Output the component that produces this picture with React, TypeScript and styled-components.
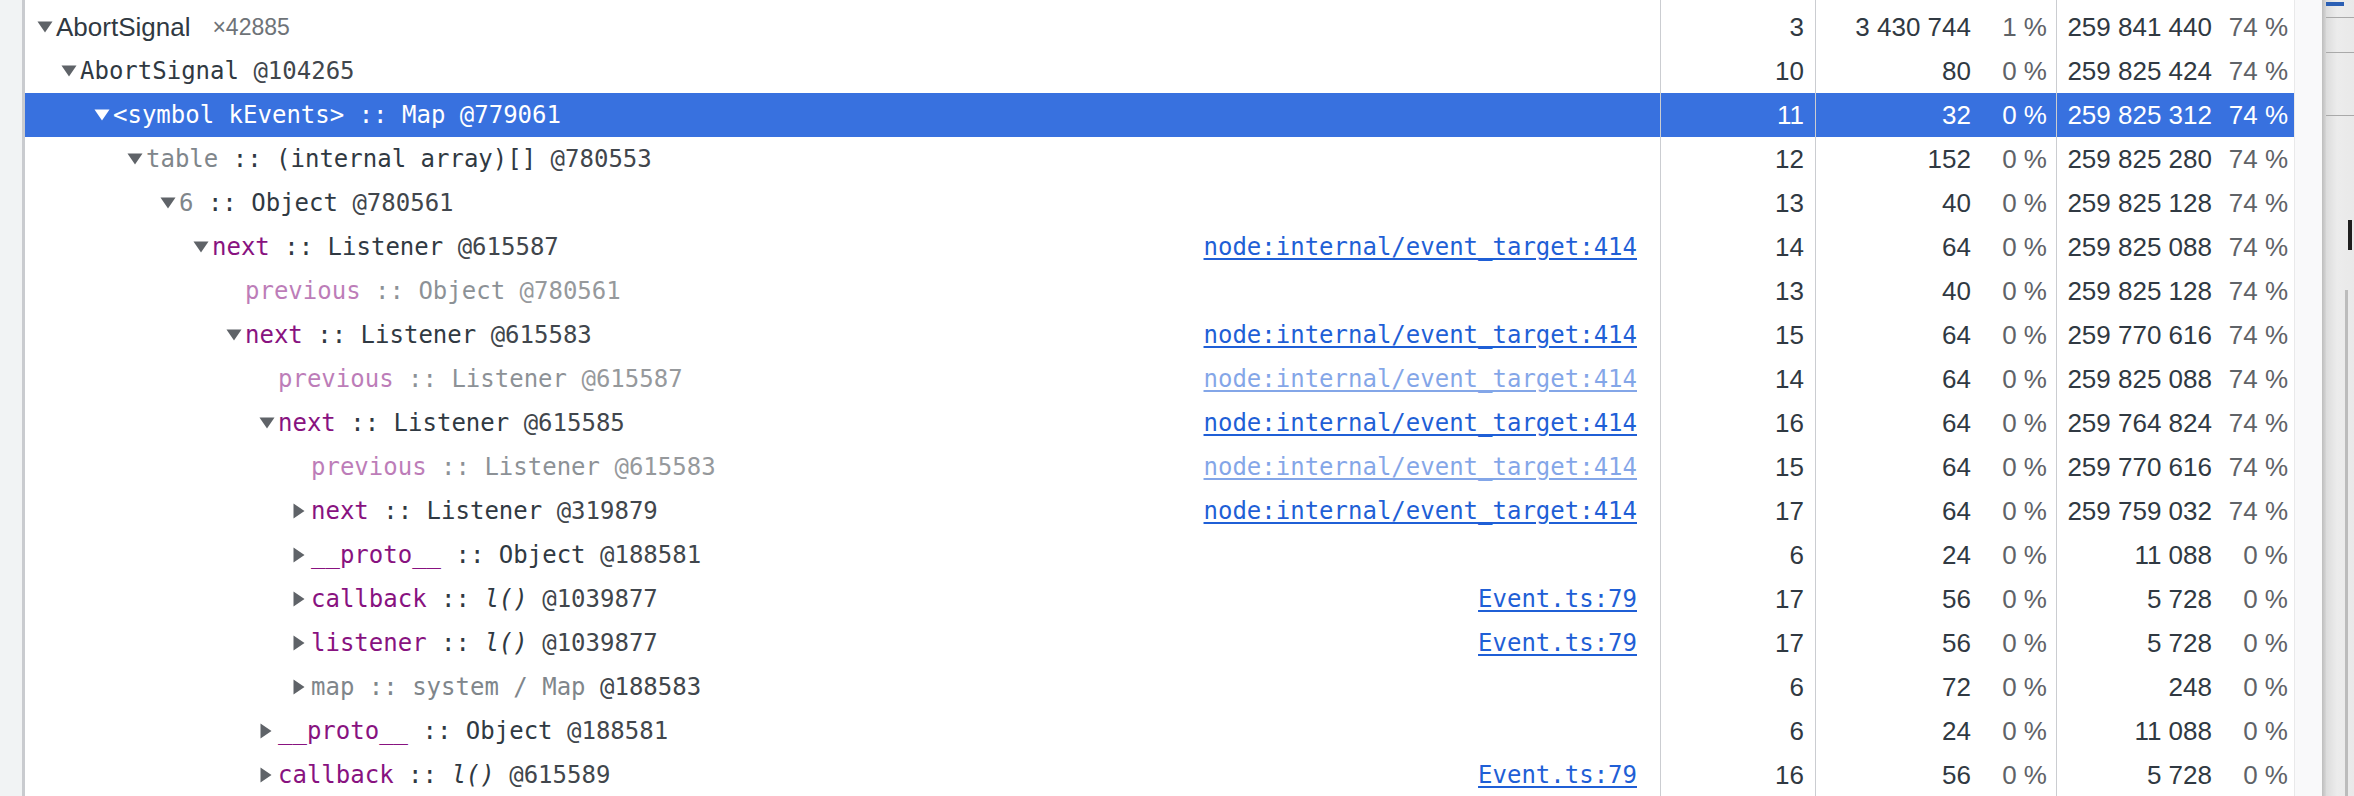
import React from "react";
import styled, { createGlobalStyle } from "styled-components";

const GlobalStyle = createGlobalStyle`
  html, body { margin: 0; padding: 0; background: #ffffff; overflow: hidden; }
  #root { width: 2354px; height: 796px; }
`;

const MONO = `"DejaVu Sans Mono", "Liberation Mono", monospace`;
const SANS = `"Liberation Sans", Arial, sans-serif`;

const Page = styled.div`
  display: flex;
  width: 2354px;
  height: 796px;
  overflow: hidden;
  background: #ffffff;
`;

const Gutter = styled.div`
  flex: 0 0 22px;
  background: #f1f3f4;
  border-right: 3px solid #c9cbcf;
`;

const Grid = styled.div`
  flex: 0 0 2269px;
  display: flex;
  flex-direction: column;
`;

const Row = styled.div<{ $sel?: boolean; $h?: number }>`
  display: grid;
  grid-template-columns: 1636px 155px 241px 237px;
  height: ${(p) => p.$h ?? 44}px;
  flex: 0 0 auto;
  background: ${(p) => (p.$sel ? "#3871df" : "transparent")};
  color: ${(p) => (p.$sel ? "#ffffff" : "#303942")};
`;

const Cell = styled.div`
  box-sizing: border-box;
  border-right: 1px solid #cbcdd1;
  height: 100%;
  &:last-child { border-right: none; }
`;

const NameCell = styled(Cell)<{ $indent: number }>`
  display: flex;
  align-items: center;
  padding-left: ${(p) => p.$indent}px;
  padding-right: 23px;
  white-space: pre;
  font-family: ${MONO};
  font-size: 24px;
`;

const NameBody = styled.div<{ $dim?: boolean }>`
  display: flex;
  align-items: center;
  opacity: ${(p) => (p.$dim ? 0.55 : 1)};
`;

const Toggle = styled.span<{ $sel?: boolean }>`
  flex: 0 0 19px;
  width: 19px;
  height: 16px;
  display: inline-flex;
  align-items: center;
  color: ${(p) => (p.$sel ? "#ffffff" : "#5f6368")};
`;

const Prop = styled.span<{ $sel?: boolean; $gray?: boolean }>`
  color: ${(p) => (p.$sel ? "#ffffff" : p.$gray ? "#80868b" : "#881280")};
`;

const Plain = styled.span<{ $sel?: boolean; $gray?: boolean; $italic?: boolean }>`
  color: ${(p) => (p.$sel ? "#ffffff" : p.$gray ? "#80868b" : "#303942")};
  font-style: ${(p) => (p.$italic ? "italic" : "normal")};
`;

const IdText = styled.span<{ $sel?: boolean }>`
  color: ${(p) => (p.$sel ? "#ffffff" : "#41464c")};
`;

const GroupName = styled.span`
  font-family: ${SANS};
  font-size: 26px;
  color: #303942;
`;

const GroupCount = styled.span`
  font-family: ${SANS};
  font-size: 23px;
  color: #6e7378;
  margin-left: 22px;
`;

const Link = styled.a<{ $dim?: boolean }>`
  margin-left: auto;
  color: #1f5fd6;
  text-decoration: underline;
  text-underline-offset: 3px;
  font-family: ${MONO};
  font-size: 24px;
  opacity: ${(p) => (p.$dim ? 0.55 : 1)};
  cursor: pointer;
`;

const NumCell = styled(Cell)<{ $pr: number }>`
  display: flex;
  align-items: center;
  justify-content: flex-end;
  padding-right: ${(p) => p.$pr}px;
  font-family: ${SANS};
  font-size: 26px;
  white-space: pre;
`;

const Pct = styled.span<{ $sel?: boolean }>`
  display: inline-block;
  width: 76px;
  text-align: right;
  color: ${(p) => (p.$sel ? "#ffffff" : "#5f6368")};
`;

const Track = styled.div`
  flex: 0 0 27px;
  background: #f9f9fa;
  border-left: 1px solid #e9e9ea;
`;

const Divider = styled.div`
  flex: 0 0 4px;
  background: linear-gradient(to right, #bdbdbd, #d6d6d6);
`;

const Side = styled.div`
  flex: 0 0 28px;
  display: flex;
  flex-direction: column;
  background: linear-gradient(to right, #dcdcdc, #ececec 40%, #e9e9e9);
`;

const SideTab = styled.div`
  width: 18px;
  height: 4px;
  margin-top: 2px;
  background: #2b5fb4;
`;

const SideRule = styled.div<{ $mt: number }>`
  height: 1px;
  margin-top: ${(p) => p.$mt}px;
  background: #a9a9a9;
`;

const SideCaret = styled.div`
  width: 4px;
  height: 30px;
  margin-top: 104px;
  margin-left: 22px;
  background: #1f1f1f;
`;

const SideScroll = styled.div`
  width: 3px;
  flex: 1 1 auto;
  margin-top: 40px;
  margin-left: 19px;
  background: #bcbcbc;
`;

type Kind = "prop" | "gprop" | "sep" | "cls" | "sys" | "fn" | "id";
type Seg = [Kind, string];
type State = "open" | "closed" | "leaf";

interface RowData {
  level: number;
  state: State;
  segs?: Seg[];
  group?: [string, string];
  link?: string;
  dim?: boolean;
  sel?: boolean;
  d: string;
  s: string;
  sp: string;
  r: string;
  rp: string;
}

const NODE = "node:internal/event_target:414";
const EV = "Event.ts:79";

const rows: RowData[] = [
  { level: 0, state: "open", group: ["AbortSignal", "×42885"], d: "3", s: "3 430 744", sp: "1 %", r: "259 841 440", rp: "74 %" },
  { level: 1, state: "open", segs: [["cls", "AbortSignal"], ["sep", " "], ["id", "@104265"]], d: "10", s: "80", sp: "0 %", r: "259 825 424", rp: "74 %" },
  { level: 2, state: "open", sel: true, segs: [["prop", "<symbol kEvents>"], ["sep", " :: "], ["cls", "Map"], ["sep", " "], ["id", "@779061"]], d: "11", s: "32", sp: "0 %", r: "259 825 312", rp: "74 %" },
  { level: 3, state: "open", segs: [["gprop", "table"], ["sep", " :: "], ["cls", "(internal array)[]"], ["sep", " "], ["id", "@780553"]], d: "12", s: "152", sp: "0 %", r: "259 825 280", rp: "74 %" },
  { level: 4, state: "open", segs: [["gprop", "6"], ["sep", " :: "], ["cls", "Object"], ["sep", " "], ["id", "@780561"]], d: "13", s: "40", sp: "0 %", r: "259 825 128", rp: "74 %" },
  { level: 5, state: "open", link: NODE, segs: [["prop", "next"], ["sep", " :: "], ["cls", "Listener"], ["sep", " "], ["id", "@615587"]], d: "14", s: "64", sp: "0 %", r: "259 825 088", rp: "74 %" },
  { level: 6, state: "leaf", dim: true, segs: [["prop", "previous"], ["sep", " :: "], ["cls", "Object"], ["sep", " "], ["id", "@780561"]], d: "13", s: "40", sp: "0 %", r: "259 825 128", rp: "74 %" },
  { level: 6, state: "open", link: NODE, segs: [["prop", "next"], ["sep", " :: "], ["cls", "Listener"], ["sep", " "], ["id", "@615583"]], d: "15", s: "64", sp: "0 %", r: "259 770 616", rp: "74 %" },
  { level: 7, state: "leaf", dim: true, link: NODE, segs: [["prop", "previous"], ["sep", " :: "], ["cls", "Listener"], ["sep", " "], ["id", "@615587"]], d: "14", s: "64", sp: "0 %", r: "259 825 088", rp: "74 %" },
  { level: 7, state: "open", link: NODE, segs: [["prop", "next"], ["sep", " :: "], ["cls", "Listener"], ["sep", " "], ["id", "@615585"]], d: "16", s: "64", sp: "0 %", r: "259 764 824", rp: "74 %" },
  { level: 8, state: "leaf", dim: true, link: NODE, segs: [["prop", "previous"], ["sep", " :: "], ["cls", "Listener"], ["sep", " "], ["id", "@615583"]], d: "15", s: "64", sp: "0 %", r: "259 770 616", rp: "74 %" },
  { level: 8, state: "closed", link: NODE, segs: [["prop", "next"], ["sep", " :: "], ["cls", "Listener"], ["sep", " "], ["id", "@319879"]], d: "17", s: "64", sp: "0 %", r: "259 759 032", rp: "74 %" },
  { level: 8, state: "closed", segs: [["prop", "__proto__"], ["sep", " :: "], ["cls", "Object"], ["sep", " "], ["id", "@188581"]], d: "6", s: "24", sp: "0 %", r: "11 088", rp: "0 %" },
  { level: 8, state: "closed", link: EV, segs: [["prop", "callback"], ["sep", " :: "], ["fn", "l()"], ["sep", " "], ["id", "@1039877"]], d: "17", s: "56", sp: "0 %", r: "5 728", rp: "0 %" },
  { level: 8, state: "closed", link: EV, segs: [["prop", "listener"], ["sep", " :: "], ["fn", "l()"], ["sep", " "], ["id", "@1039877"]], d: "17", s: "56", sp: "0 %", r: "5 728", rp: "0 %" },
  { level: 8, state: "closed", segs: [["gprop", "map"], ["sys", " :: "], ["sys", "system / Map"], ["sep", " "], ["id", "@188583"]], d: "6", s: "72", sp: "0 %", r: "248", rp: "0 %" },
  { level: 7, state: "closed", segs: [["prop", "__proto__"], ["sep", " :: "], ["cls", "Object"], ["sep", " "], ["id", "@188581"]], d: "6", s: "24", sp: "0 %", r: "11 088", rp: "0 %" },
  { level: 7, state: "closed", link: EV, segs: [["prop", "callback"], ["sep", " :: "], ["fn", "l()"], ["sep", " "], ["id", "@615589"]], d: "16", s: "56", sp: "0 %", r: "5 728", rp: "0 %" },
];

const indentFor = (level: number) => (level === 0 ? 12 : 36 + (level - 1) * 33);

function Arrow({ state, sel }: { state: State; sel?: boolean }) {
  return (
    <Toggle $sel={sel}>
      {state === "open" && (
        <svg width="16" height="16" viewBox="0 0 16 16">
          <polygon points="0.5,2.5 15.5,2.5 8,13.5" fill="currentColor" />
        </svg>
      )}
      {state === "closed" && (
        <svg width="16" height="16" viewBox="0 0 16 16">
          <polygon points="1.5,0.5 12.5,8 1.5,15.5" fill="currentColor" />
        </svg>
      )}
    </Toggle>
  );
}

function Segment({ seg, sel }: { seg: Seg; sel?: boolean }) {
  const [k, t] = seg;
  if (k === "prop") return <Prop $sel={sel}>{t}</Prop>;
  if (k === "gprop") return <Prop $sel={sel} $gray>{t}</Prop>;
  if (k === "sys") return <Plain $sel={sel} $gray>{t}</Plain>;
  if (k === "fn") return <Plain $sel={sel} $italic>{t}</Plain>;
  if (k === "id") return <IdText $sel={sel}>{t}</IdText>;
  return <Plain $sel={sel}>{t}</Plain>;
}

function TreeRow({ row }: { row: RowData }) {
  return (
    <Row $sel={row.sel}>
      <NameCell $indent={indentFor(row.level)}>
        <NameBody $dim={row.dim}>
          <Arrow state={row.state} sel={row.sel} />
          {row.group ? (
            <>
              <GroupName>{row.group[0]}</GroupName>
              <GroupCount>{row.group[1]}</GroupCount>
            </>
          ) : (
            row.segs!.map((s, i) => <Segment key={i} seg={s} sel={row.sel} />)
          )}
        </NameBody>
        {row.link && <Link $dim={row.dim}>{row.link}</Link>}
      </NameCell>
      <NumCell $pr={11}>{row.d}</NumCell>
      <NumCell $pr={9}>
        {row.s}
        <Pct $sel={row.sel}>{row.sp}</Pct>
      </NumCell>
      <NumCell $pr={6}>
        {row.r}
        <Pct $sel={row.sel}>{row.rp}</Pct>
      </NumCell>
    </Row>
  );
}

export default function App() {
  return (
    <>
      <GlobalStyle />
      <Page>
        <Gutter />
        <Grid>
          <Row $h={5}>
            <Cell />
            <Cell />
            <Cell />
            <Cell />
          </Row>
          {rows.map((r, i) => (
            <TreeRow key={i} row={r} />
          ))}
        </Grid>
        <Track />
        <Divider />
        <Side>
          <SideTab />
          <SideRule $mt={11} />
          <SideRule $mt={34} />
          <SideRule $mt={62} />
          <SideCaret />
          <SideScroll />
        </Side>
      </Page>
    </>
  );
}
